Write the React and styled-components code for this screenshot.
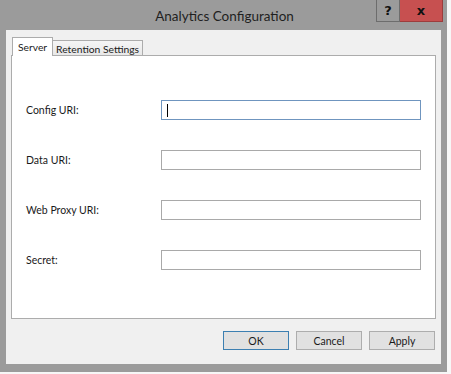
import React from "react";
import styled, { createGlobalStyle } from "styled-components";

const Global = createGlobalStyle`
  html, body { margin: 0; padding: 0; background: #f7f7f7; }
  body { font-family: Lato, "Noto Sans", sans-serif; }
  * { box-sizing: border-box; }
`;

const Window = styled.div`
  width: 447px;
  height: 372px;
  background: #9b9b9b;
  display: flex;
  flex-direction: column;
  padding: 0 6px 8px 6px;
`;

const TitleBar = styled.div`
  height: 31px;
  display: grid;
  grid-template-columns: 1fr auto 1fr;
  align-items: start;
  margin: 0 -6px;
`;

const Title = styled.div`
  grid-column: 2;
  font-size: 13.5px;
  color: #1f1f1f;
  padding-top: 8px;
  padding-left: 2px;
`;

const Caption = styled.div`
  grid-column: 3;
  justify-self: end;
  display: flex;
  margin-right: 4px;
`;

const CapButton = styled.div`
  width: ${(p) => p.$w}px;
  height: 22px;
  background: ${(p) => (p.$close ? "#c75050" : "#9b9b9b")};
  border: 1px solid ${(p) => (p.$close ? "#9d3c3c" : "#6d6d6d")};
  border-top: none;
  ${(p) => (p.$close ? "border-left: none;" : "")}
  display: flex;
  align-items: center;
  justify-content: center;
  font-family: "DejaVu Sans", sans-serif;
  font-weight: bold;
  font-size: 13px;
  color: #111;
`;

const Client = styled.div`
  flex: 1;
  background: #f0f0f0;
  display: flex;
  flex-direction: column;
  padding: 7px 5px 14px 5px;
`;

const TabStrip = styled.div`
  display: flex;
  align-items: flex-end;
  padding-left: 1px;
  height: 19px;
  position: relative;
  z-index: 1;
`;

const Tab = styled.div`
  height: ${(p) => (p.$active ? 19 : 16)}px;
  padding: 0 ${(p) => (p.$active ? 5 : 3)}px;
  border: 1px solid #acacac;
  border-bottom: ${(p) => (p.$active ? "none" : "1px solid #acacac")};
  ${(p) => (p.$active ? "" : "border-left: none;")}
  background: ${(p) => (p.$active ? "#ffffff" : "linear-gradient(#f5f5f5, #e8e8e8)")};
  font-size: 10.3px;
  color: #1a1a1a;
  display: flex;
  align-items: center;
  padding-top: ${(p) => (p.$active ? 0 : 1)}px;
`;

const Panel = styled.div`
  height: 264px;
  margin-top: -1px;
  background: #ffffff;
  border: 1px solid #acacac;
  display: grid;
  grid-template-columns: 135px 1fr;
  grid-auto-rows: 20px;
  row-gap: 30px;
  align-items: center;
  padding: 44px 14px 0 14px;
`;

const Label = styled.div`
  font-size: 10.5px;
  color: #1a1a1a;
`;

const TextBox = styled.div`
  height: 20px;
  border: 1px solid ${(p) => (p.$focused ? "#6f95bf" : "#a9a9a9")};
  background: #fff;
  display: flex;
  align-items: center;
  padding-left: 5px;
`;

const Caret = styled.span`
  width: 1px;
  height: 13px;
  background: #000;
`;

const Footer = styled.div`
  display: flex;
  justify-content: flex-end;
  gap: 7px;
  margin-top: 12px;
  padding-right: 1px;
`;

const Button = styled.div`
  width: 66px;
  height: 19px;
  background: #e1e1e1;
  border: 1px solid ${(p) => (p.$default ? "#3c7fb1" : "#adadad")};
  display: flex;
  align-items: center;
  justify-content: center;
  font-size: 10.5px;
  color: #1a1a1a;
`;

const fields = ["Config URI:", "Data URI:", "Web Proxy URI:", "Secret:"];

export default function App() {
  return (
    <>
      <Global />
      <Window>
        <TitleBar>
          <Title>Analytics Configuration</Title>
          <Caption>
            <CapButton $w={24}>?</CapButton>
            <CapButton $w={43} $close>
              x
            </CapButton>
          </Caption>
        </TitleBar>
        <Client>
          <TabStrip>
            <Tab $active>Server</Tab>
            <Tab>Retention Settings</Tab>
          </TabStrip>
          <Panel>
            {fields.map((f, i) => (
              <React.Fragment key={f}>
                <Label>{f}</Label>
                <TextBox $focused={i === 0}>{i === 0 && <Caret />}</TextBox>
              </React.Fragment>
            ))}
          </Panel>
          <Footer>
            <Button $default>OK</Button>
            <Button>Cancel</Button>
            <Button>Apply</Button>
          </Footer>
        </Client>
      </Window>
    </>
  );
}
